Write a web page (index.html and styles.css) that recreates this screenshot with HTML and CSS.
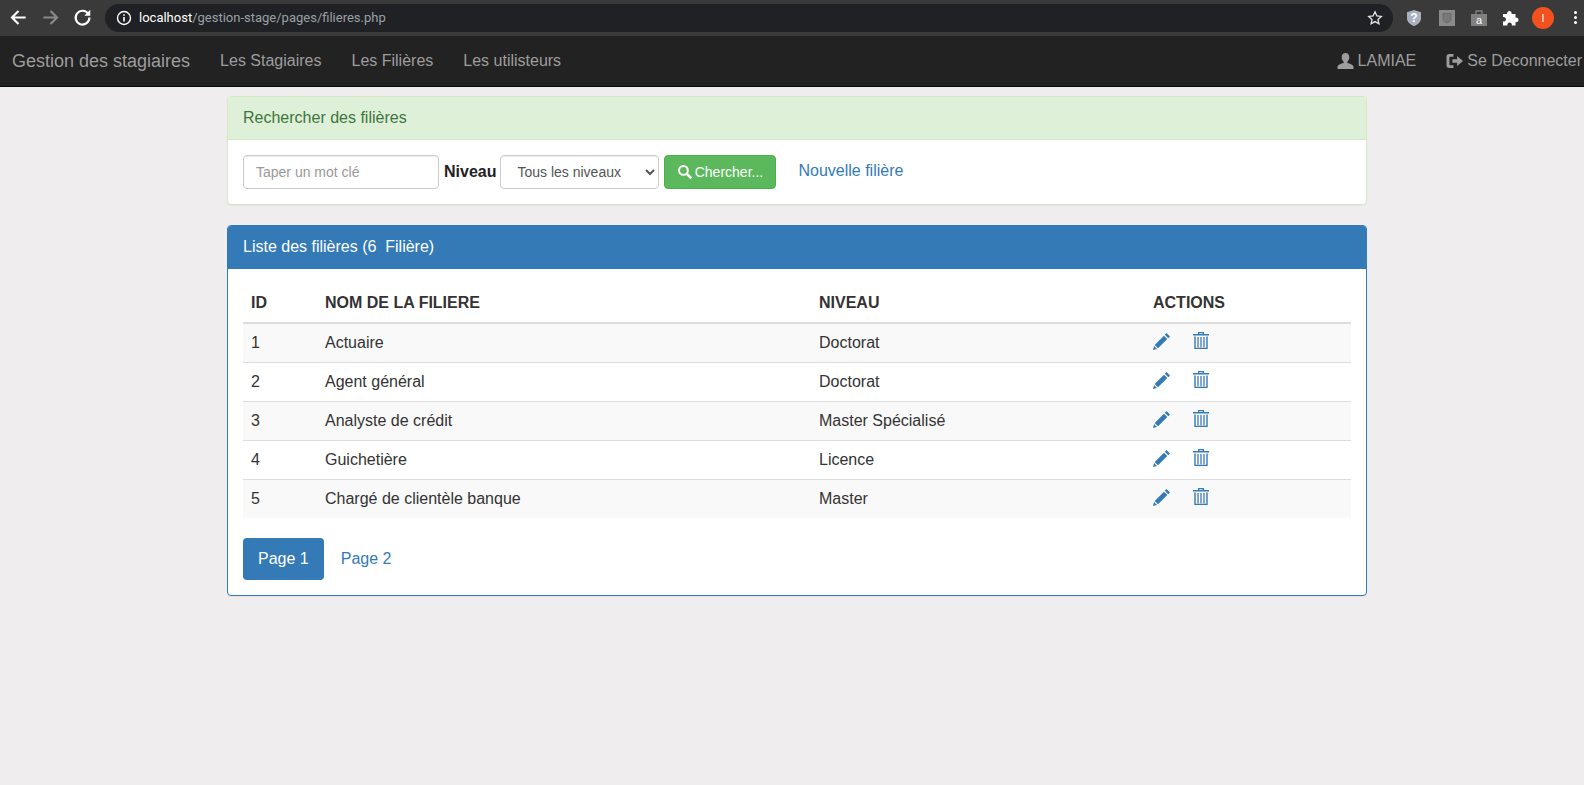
FILE: index.html
```html
<!DOCTYPE html>
<html lang="fr">
<head>
<meta charset="utf-8">
<title>Filières</title>
<link rel="stylesheet" href="styles.css">
</head>
<body>
<div class="chrome">
  <svg class="ch-ic first" viewBox="0 0 16 16"><path d="M14 8H3M8 2.5 2.5 8 8 13.5" fill="none" stroke="#fff" stroke-width="1.8"/></svg>
  <svg class="ch-ic" viewBox="0 0 16 16"><path d="M2 8h11M8 2.5 13.5 8 8 13.5" fill="none" stroke="#8a8a8a" stroke-width="1.8"/></svg>
  <svg class="ch-ic" viewBox="0 0 16 16"><path d="M13 5.2A5.8 5.8 0 1 0 13.8 8" fill="none" stroke="#fff" stroke-width="1.8"/><path d="M14.5 1.5v5h-5z" fill="#fff"/></svg>
  <div class="omni">
    <svg class="info" viewBox="0 0 16 16"><circle cx="8" cy="8" r="6.5" fill="none" stroke="#fff" stroke-width="1.4"/><path d="M7.2 7h1.6v4.6H7.2zM7.2 4.2h1.6v1.6H7.2z" fill="#fff"/></svg>
    <span class="url"><span class="host">localhost</span>/gestion-stage/pages/filieres.php</span>
    <svg class="star" viewBox="0 0 16 16"><path d="m8 1.800 1.900 4.100 4.400.5-3.300 3 .9 4.400L8 11.600l-3.900 2.200.9-4.400-3.300-3 4.400-.5z" fill="none" stroke="#e8e8e8" stroke-width="1.300"/></svg>
  </div>
  <div class="exts">
    <svg class="ext shield" viewBox="0 0 14 16"><path d="M0 2.200 7 0l7 2.200v6.300c0 3.300-3 6-7 7.500-4-1.500-7-4.200-7-7.500z" fill="#a9b0c0"/><text x="7" y="11.500" class="q">?</text></svg>
    <svg class="ext" viewBox="0 0 16 16"><rect width="16" height="16" fill="#8a8a8a"/><path d="M4 3.500h8V9c0 2-2 3.200-4 3.800C6 12.200 4 11 4 9z" fill="#787878" stroke="#6a6a6a"/></svg>
    <svg class="ext" viewBox="0 0 16 16"><path d="M0 4h16v12H0z" fill="#808080"/><path d="M5 4.500V1h6v3.500" fill="none" stroke="#808080" stroke-width="1.300"/><text x="8" y="13.500" class="a">a</text></svg>
    <svg class="ext puzzle" viewBox="0 0 16 16"><path d="M0 4h4.200a2.300 2.300 0 1 1 4.400 0H12.500v3.700a2.300 2.300 0 1 1 0 4.400V15.500H8.800a2.300 2.300 0 1 0-4.400 0H0V11.500a2.300 2.300 0 1 0 0-4.400z" fill="#fff"/></svg>
    <span class="avatar">I</span>
    <span class="dots"><i></i><i></i><i></i></span>
  </div>
</div>

<nav class="navbar">
  <a class="brand">Gestion des stagiaires</a>
  <a class="nav-link">Les Stagiaires</a>
  <a class="nav-link">Les Filières</a>
  <a class="nav-link">Les utilisteurs</a>
  <div class="nav-right">
    <a class="nav-link icon-link"><svg class="gly" viewBox="0 0 16 16"><path d="M8 0c2.300 0 3.600 1.700 3.600 4 0 1.700-.8 3.300-1.800 4.100v1.200c2.400.6 5.700 1.900 5.700 3.300V15H.5v-2.400c0-1.400 3.300-2.700 5.700-3.300V8.100C5.200 7.300 4.400 5.700 4.400 4 4.400 1.700 5.700 0 8 0z" fill="#9d9d9d"/></svg>LAMIAE</a>
    <a class="nav-link icon-link last"><svg class="gly" viewBox="0 0 16 16"><path d="M7 1H3a2.500 2.500 0 0 0-2.500 2.500v8A2.500 2.500 0 0 0 3 14h4v-2.500H4a.8.800 0 0 1-.8-.8V4.300A.8.800 0 0 1 4 3.500h3z" fill="#9d9d9d"/><path d="M6 5.800h4.500V2.800L16 7.500l-5.500 4.700V9.200H6z" fill="#9d9d9d"/></svg>Se Deconnecter</a>
  </div>
</nav>

<main class="main">
  <section class="panel panel-success">
    <div class="panel-heading">Rechercher des filières</div>
    <div class="panel-body search">
      <input class="field keyword" type="text" placeholder="Taper un mot clé">
      <label class="lab">Niveau</label>
      <select class="field level"><option>Tous les niveaux</option></select>
      <button class="btn-search" type="button"><svg class="gly-s" viewBox="0 0 16 16"><circle cx="6.200" cy="6.200" r="5" fill="none" stroke="#fff" stroke-width="2.300"/><path d="m9.800 9.800 5.400 5.400" stroke="#fff" stroke-width="3"/></svg>Chercher...</button>
      <a class="new-link">Nouvelle filière</a>
    </div>
  </section>

  <section class="panel panel-primary">
    <div class="panel-heading">Liste des filières (6&nbsp; Filière)</div>
    <div class="panel-body">
      <table class="table">
        <thead>
          <tr><th class="c1">ID</th><th class="c2">NOM DE LA FILIERE</th><th class="c3">NIVEAU</th><th class="c4">ACTIONS</th></tr>
        </thead>
        <tbody>
          <tr><td>1</td><td>Actuaire</td><td>Doctorat</td><td class="acts"><svg class="act pen" viewBox="0 0 17 17"><use href="#pencil"/></svg><svg class="act trash" viewBox="0 0 16 17"><use href="#trash"/></svg></td></tr>
          <tr><td>2</td><td>Agent général</td><td>Doctorat</td><td class="acts"><svg class="act pen" viewBox="0 0 17 17"><use href="#pencil"/></svg><svg class="act trash" viewBox="0 0 16 17"><use href="#trash"/></svg></td></tr>
          <tr><td>3</td><td>Analyste de crédit</td><td>Master Spécialisé</td><td class="acts"><svg class="act pen" viewBox="0 0 17 17"><use href="#pencil"/></svg><svg class="act trash" viewBox="0 0 16 17"><use href="#trash"/></svg></td></tr>
          <tr><td>4</td><td>Guichetière</td><td>Licence</td><td class="acts"><svg class="act pen" viewBox="0 0 17 17"><use href="#pencil"/></svg><svg class="act trash" viewBox="0 0 16 17"><use href="#trash"/></svg></td></tr>
          <tr><td>5</td><td>Chargé de clientèle banque</td><td>Master</td><td class="acts"><svg class="act pen" viewBox="0 0 17 17"><use href="#pencil"/></svg><svg class="act trash" viewBox="0 0 16 17"><use href="#trash"/></svg></td></tr>
        </tbody>
      </table>
      <div class="pager"><a class="page active">Page 1</a><a class="page">Page 2</a></div>
    </div>
  </section>
</main>

<svg class="defs" aria-hidden="true">
  <symbol id="pencil" viewBox="0 0 17 17"><path d="M13.500 0 17 3.500 15.300 5.200 11.800 1.700zM10.900 2.700l3.400 3.400L5 15.300 1.700 12zM1 13l3 3-4 1z" fill="#337ab7"/></symbol>
  <symbol id="trash" viewBox="0 0 16 17"><path d="M5 0h6v2h5v1.600H0V2h5zM6.300 1.200v.8h3.400v-.8z" fill="#337ab7"/><path d="M2 4.500V16.400h12V4.500" fill="none" stroke="#337ab7" stroke-width="1.400"/><path d="M5 5v10.500M8 5v10.500M11 5v10.500" fill="none" stroke="#5a8cc4" stroke-width="1.500"/></symbol>
</svg>
</body>
</html>
```
FILE: styles.css
```css
* { box-sizing: border-box; }
html, body { margin: 0; padding: 0; }
body {
  background: #efedee;
  font-family: "Liberation Sans", Arial, sans-serif;
  font-size: 16px;
  line-height: 22px;
  color: #333;
  height: 785px;
  overflow: hidden;
}
.chrome {
  height: 36px;
  background: #3a3a3b;
  display: flex;
  align-items: center;
  padding: 0 0 1px 0;
}
.ch-ic { width: 19px; height: 19px; margin-left: 13px; flex: none; }
.ch-ic.first { margin-left: 9px; }
.omni {
  margin-left: 13px;
  width: 1288px;
  height: 28px;
  background: #202124;
  border-radius: 14px;
  display: flex;
  align-items: center;
  padding: 0 10px 0 11px;
  flex: none;
}
.info { width: 16px; height: 16px; flex: none; }
.url { margin-left: 7px; font-family: "Roboto", "Liberation Sans", sans-serif; font-size: 13px; color: #9aa0a6; flex: 1; white-space: nowrap; }
.host { color: #fff; }
.star { width: 16px; height: 16px; flex: none; }
.exts { display: flex; align-items: center; flex: none; margin-left: 14px; }
.ext { width: 16px; height: 16px; margin-right: 16px; flex: none; }
.shield { width: 14px; margin-right: 18px; }
.ext .q { font: bold 12px "Liberation Sans", sans-serif; fill: #fff; text-anchor: middle; }
.ext .a { font: 11px "Liberation Sans", sans-serif; fill: #fff; text-anchor: middle; }
.avatar {
  width: 22px; height: 22px; border-radius: 50%;
  background: #f4511e; color: #fff; font-size: 11px;
  display: flex; align-items: center; justify-content: center;
  margin-left: -3px;
}
.dots { display: flex; flex-direction: column; gap: 2px; margin-left: 20px; }
.dots i { width: 3px; height: 3px; border-radius: 50%; background: #fff; display: block; }

.navbar {
  height: 51px;
  background: #222;
  border-bottom: 1px solid #080808;
  display: flex;
  align-items: center;
  color: #9d9d9d;
  white-space: nowrap;
  overflow: hidden;
}
.brand { font-size: 18px; margin-left: 12px; margin-right: 15px; }
.nav-link { padding: 0 15px; }
.nav-right { margin-left: auto; display: flex; margin-right: 2px; }
.icon-link { display: flex; align-items: center; gap: 4px; }
.icon-link.last { padding-right: 0; }
.gly { width: 17px; height: 17px; }

.main { width: 1140px; margin: 9px 0 0 227px; }
.panel {
  background: #fff;
  border: 1px solid transparent;
  border-radius: 4px;
  margin-bottom: 20px;
  box-shadow: 0 1px 1px rgba(0,0,0,.05);
}
.panel-heading { padding: 10px 15px; border-bottom: 1px solid transparent; border-radius: 3px 3px 0 0; }
.panel-body { padding: 15px; }
.panel-success { border-color: #d6e9c6; }
.panel-success .panel-heading { background: #dff0d8; color: #3c763d; border-bottom-color: #d6e9c6; }
.panel-primary { border-color: #337ab7; }
.panel-primary .panel-heading { background: #337ab7; color: #fff; border-bottom-color: #337ab7; }

.search { display: flex; align-items: center; height: 64px; }
.field {
  height: 34px;
  border: 1px solid #ccc;
  border-radius: 4px;
  background: #fff;
  font-family: "Liberation Sans", Arial, sans-serif;
  font-size: 14px;
  color: #555;
  box-shadow: inset 0 1px 1px rgba(0,0,0,.075);
}
.keyword { width: 196px; padding: 6px 12px; }
.keyword::placeholder { color: #999; opacity: 1; }
.lab { font-weight: 700; color: #222; margin-left: 5px; margin-right: 4px; }
.level { width: 159px; padding: 6px 12px; }
.btn-search {
  height: 34px; width: 112px; margin-left: 5px;
  background: #5cb85c; border: 1px solid #4cae4c; border-radius: 4px;
  color: #fff; font-family: "Liberation Sans", Arial, sans-serif; font-size: 14px;
  padding: 0; display: flex; align-items: center; justify-content: center; gap: 3px;
}
.gly-s { width: 14px; height: 14px; }
.new-link { color: #337ab7; margin-left: 22px; margin-bottom: 3px; }

.table { width: 100%; border-collapse: collapse; border-spacing: 0; table-layout: fixed; margin-bottom: 20px; }
.table th, .table td { padding: 8px; text-align: left; vertical-align: top; }
.table th { font-weight: 700; border-bottom: 2px solid #ddd; }
.table td { border-top: 1px solid #ddd; }
.table tbody tr:first-child td { border-top: 0; }
.table tbody tr:nth-child(odd) { background: #f9f9f9; }
.c1 { width: 74px; }
.c2 { width: 494px; }
.c3 { width: 334px; }
.acts { white-space: nowrap; line-height: 0; }
.act { height: 17px; display: inline-block; vertical-align: top; }
.pen { width: 17px; margin-top: 1px; margin-right: 23px; }
.trash { width: 16px; margin-top: 0; }

.pager { display: flex; }
.page { padding: 10px 15px; border-radius: 4px; color: #337ab7; }
.page.active { background: #337ab7; color: #fff; margin-right: 2px; }
.defs { display: none; }
```
